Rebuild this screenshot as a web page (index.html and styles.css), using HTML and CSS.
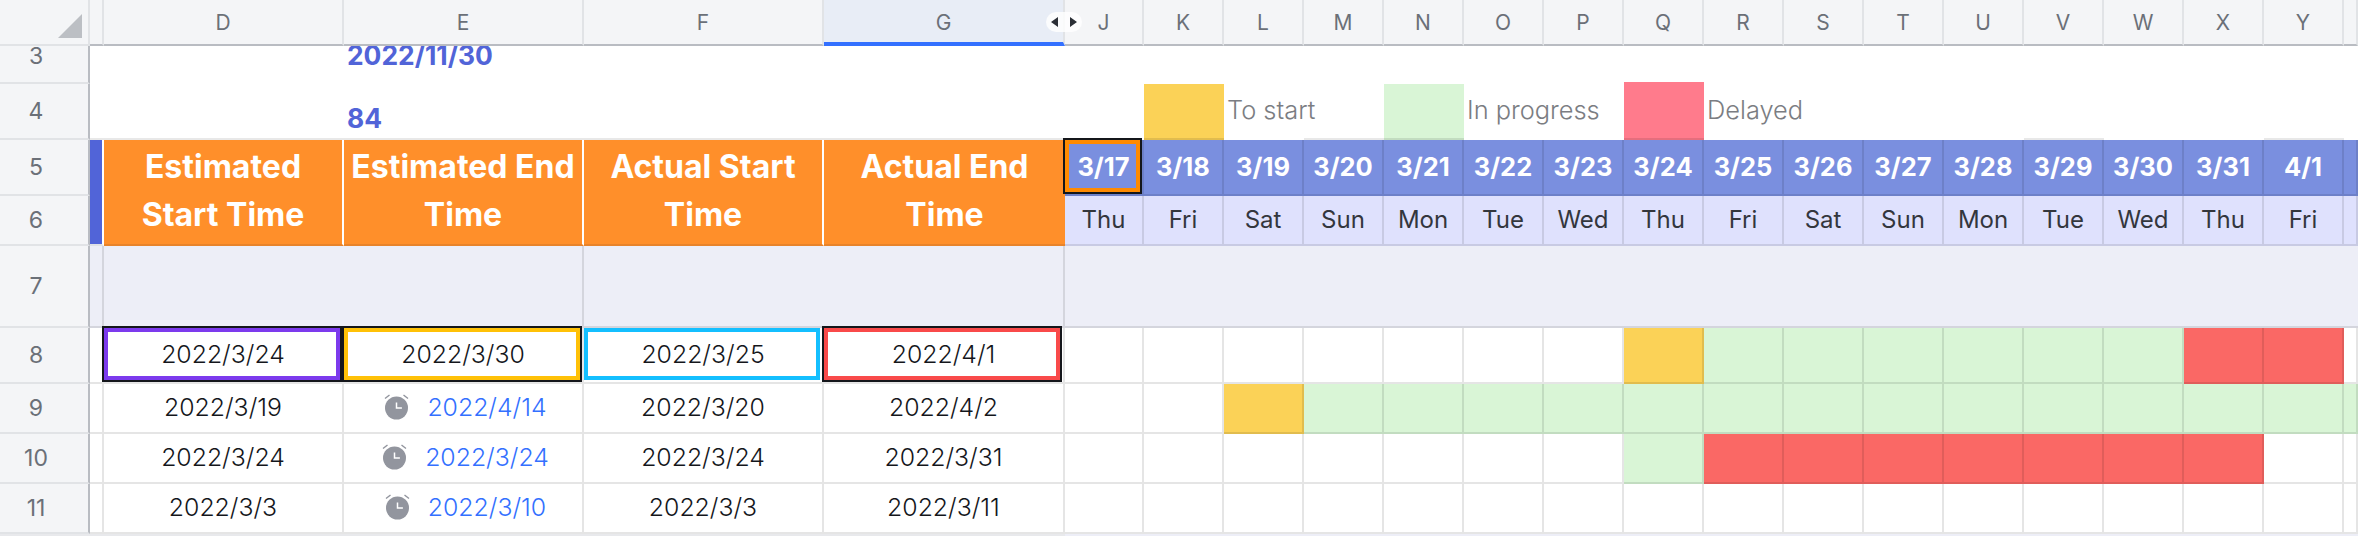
FILE: index.html
```html
<!DOCTYPE html>
<html lang="en">
<head>
  <meta charset="UTF-8">
  <title>Project schedule</title>
  <link rel="stylesheet" href="styles.css">
</head>
<body>
  <div class="sheet">
    <!-- column letters -->
    <div class="col-head corner"><span class="corner-mark"></span></div>
    <div class="col-head"></div>
    <div class="col-head">D</div>
    <div class="col-head">E</div>
    <div class="col-head">F</div>
    <div class="col-head col-active">G
      <div class="resize-pill">
        <svg width="36" height="20" viewBox="0 0 36 20"><path d="M12 5v10l-7-5zM24 5v10l7-5z" fill="#2b2f36"/></svg>
      </div>
    </div>
    <div class="col-head">J</div>
    <div class="col-head">K</div>
    <div class="col-head">L</div>
    <div class="col-head">M</div>
    <div class="col-head">N</div>
    <div class="col-head">O</div>
    <div class="col-head">P</div>
    <div class="col-head">Q</div>
    <div class="col-head">R</div>
    <div class="col-head">S</div>
    <div class="col-head">T</div>
    <div class="col-head">U</div>
    <div class="col-head">V</div>
    <div class="col-head">W</div>
    <div class="col-head">X</div>
    <div class="col-head">Y</div>
    <div class="col-head"></div>

    <!-- row 3 -->
    <div class="row-head row-3-num">3</div>
    <div class="blank span-2"></div>
    <div class="blank summary summary-clipped">2022/11/30</div>
    <div class="blank span-rest-3"></div>

    <!-- row 4 -->
    <div class="row-head">4</div>
    <div class="blank span-2 rule"></div>
    <div class="blank summary summary-low rule">84</div>
    <div class="blank rule"></div>
    <div class="blank rule"></div>
    <div class="blank"></div>
    <div class="legend-box to-start"></div>
    <div class="legend-text">To start</div>
    <div class="blank rule"></div>
    <div class="legend-box in-progress"></div>
    <div class="legend-text">In progress</div>
    <div class="blank"></div>
    <div class="legend-box delayed legend-raised"></div>
    <div class="legend-text">Delayed</div>
    <div class="blank"></div>
    <div class="blank"></div>
    <div class="blank"></div>
    <div class="blank rule"></div>
    <div class="blank"></div>
    <div class="blank"></div>
    <div class="blank rule"></div>
    <div class="blank"></div>

    <!-- rows 5 and 6 -->
    <div class="row-head">5</div>
    <div class="freeze-mark"></div>
    <div class="title">Estimated<br>Start Time</div>
    <div class="title">Estimated End<br>Time</div>
    <div class="title">Actual Start<br>Time</div>
    <div class="title title-last">Actual End<br>Time</div>
    <div class="date date-selected">3/17</div>
    <div class="date">3/18</div>
    <div class="date">3/19</div>
    <div class="date">3/20</div>
    <div class="date">3/21</div>
    <div class="date">3/22</div>
    <div class="date">3/23</div>
    <div class="date">3/24</div>
    <div class="date">3/25</div>
    <div class="date">3/26</div>
    <div class="date">3/27</div>
    <div class="date">3/28</div>
    <div class="date">3/29</div>
    <div class="date">3/30</div>
    <div class="date">3/31</div>
    <div class="date">4/1</div>
    <div class="date"></div>

    <div class="row-head">6</div>
    <div class="day">Thu</div>
    <div class="day">Fri</div>
    <div class="day">Sat</div>
    <div class="day">Sun</div>
    <div class="day">Mon</div>
    <div class="day">Tue</div>
    <div class="day">Wed</div>
    <div class="day">Thu</div>
    <div class="day">Fri</div>
    <div class="day">Sat</div>
    <div class="day">Sun</div>
    <div class="day">Mon</div>
    <div class="day">Tue</div>
    <div class="day">Wed</div>
    <div class="day">Thu</div>
    <div class="day">Fri</div>
    <div class="day"></div>

    <!-- row 7 -->
    <div class="row-head">7</div>
    <div class="group"></div>
    <div class="group span-2"></div>
    <div class="group span-2"></div>
    <div class="group span-timeline"></div>

    <!-- row 8 -->
    <div class="row-head">8</div>
    <div class="cell"></div>
    <div class="cell boxed boxed-purple">2022/3/24</div>
    <div class="cell boxed boxed-amber">2022/3/30</div>
    <div class="cell boxed boxed-sky">2022/3/25</div>
    <div class="cell boxed boxed-red">2022/4/1</div>
    <div class="cell"></div>
    <div class="cell"></div>
    <div class="cell"></div>
    <div class="cell"></div>
    <div class="cell"></div>
    <div class="cell"></div>
    <div class="cell"></div>
    <div class="cell to-start"></div>
    <div class="cell in-progress"></div>
    <div class="cell in-progress"></div>
    <div class="cell in-progress"></div>
    <div class="cell in-progress"></div>
    <div class="cell in-progress"></div>
    <div class="cell in-progress"></div>
    <div class="cell late"></div>
    <div class="cell late"></div>
    <div class="cell"></div>

    <!-- row 9 -->
    <div class="row-head">9</div>
    <div class="cell"></div>
    <div class="cell">2022/3/19</div>
    <div class="cell reminder">
      <svg class="alarm" width="25" height="26" viewBox="0 0 25 26"><circle cx="12.5" cy="14" r="11.5" fill="#92959e"/><path d="M1 4.5 5.5 1M24 4.5 19.5 1" stroke="#92959e" stroke-width="1.4" fill="none"/><path d="M12.5 8.5v5.6h5.4" stroke="#fff" stroke-width="1.5" fill="none"/></svg>
      <span>2022/4/14</span>
    </div>
    <div class="cell">2022/3/20</div>
    <div class="cell">2022/4/2</div>
    <div class="cell"></div>
    <div class="cell"></div>
    <div class="cell to-start"></div>
    <div class="cell in-progress"></div>
    <div class="cell in-progress"></div>
    <div class="cell in-progress"></div>
    <div class="cell in-progress"></div>
    <div class="cell in-progress"></div>
    <div class="cell in-progress"></div>
    <div class="cell in-progress"></div>
    <div class="cell in-progress"></div>
    <div class="cell in-progress"></div>
    <div class="cell in-progress"></div>
    <div class="cell in-progress"></div>
    <div class="cell in-progress"></div>
    <div class="cell in-progress"></div>
    <div class="cell in-progress"></div>

    <!-- row 10 -->
    <div class="row-head">10</div>
    <div class="cell"></div>
    <div class="cell">2022/3/24</div>
    <div class="cell reminder">
      <svg class="alarm" width="25" height="26" viewBox="0 0 25 26"><circle cx="12.5" cy="14" r="11.5" fill="#92959e"/><path d="M1 4.5 5.5 1M24 4.5 19.5 1" stroke="#92959e" stroke-width="1.4" fill="none"/><path d="M12.5 8.5v5.6h5.4" stroke="#fff" stroke-width="1.5" fill="none"/></svg>
      <span>2022/3/24</span>
    </div>
    <div class="cell">2022/3/24</div>
    <div class="cell">2022/3/31</div>
    <div class="cell"></div>
    <div class="cell"></div>
    <div class="cell"></div>
    <div class="cell"></div>
    <div class="cell"></div>
    <div class="cell"></div>
    <div class="cell"></div>
    <div class="cell in-progress"></div>
    <div class="cell late"></div>
    <div class="cell late"></div>
    <div class="cell late"></div>
    <div class="cell late"></div>
    <div class="cell late"></div>
    <div class="cell late"></div>
    <div class="cell late"></div>
    <div class="cell"></div>
    <div class="cell"></div>

    <!-- row 11 -->
    <div class="row-head">11</div>
    <div class="cell"></div>
    <div class="cell">2022/3/3</div>
    <div class="cell reminder">
      <svg class="alarm" width="25" height="26" viewBox="0 0 25 26"><circle cx="12.5" cy="14" r="11.5" fill="#92959e"/><path d="M1 4.5 5.5 1M24 4.5 19.5 1" stroke="#92959e" stroke-width="1.4" fill="none"/><path d="M12.5 8.5v5.6h5.4" stroke="#fff" stroke-width="1.5" fill="none"/></svg>
      <span>2022/3/10</span>
    </div>
    <div class="cell">2022/3/3</div>
    <div class="cell">2022/3/11</div>
    <div class="cell"></div>
    <div class="cell"></div>
    <div class="cell"></div>
    <div class="cell"></div>
    <div class="cell"></div>
    <div class="cell"></div>
    <div class="cell"></div>
    <div class="cell"></div>
    <div class="cell"></div>
    <div class="cell"></div>
    <div class="cell"></div>
    <div class="cell"></div>
    <div class="cell"></div>
    <div class="cell"></div>
    <div class="cell"></div>
    <div class="cell"></div>
    <div class="cell"></div>

    <div class="strip-left"></div>
    <div class="strip-right"></div>
  </div>
</body>
</html>
```

FILE: styles.css
```css
:root {
  --head-bg: #f4f5f7;
  --head-line: #e1e3e6;
  --head-edge: #b9bcc2;
  --head-text: #6b7078;
  --grid-line: rgba(0, 0, 0, 0.1);
  --ink: #14161b;
  --summary: #5164d8;
  --orange: #ff8f2a;
  --yellow: #fbd257;
  --green: #d9f5d6;
  --red: #fa6865;
  --pink: #ff7b8c;
  --periwinkle: #7a8fdf;
  --lilac: #dfe1fd;
  --group-bg: #edeef7;
}

* {
  margin: 0;
  padding: 0;
  box-sizing: border-box;
}

body {
  background-color: #fff;
  color: var(--ink);
  font-family: Inter, 'Liberation Sans', sans-serif;
  width: 2358px;
  height: 536px;
  overflow: hidden;
}

.sheet {
  display: grid;
  grid-template-columns: 90px 14px 240px 240px 240px 241px 79px repeat(15, 80px) 14px;
  grid-template-rows: 46px 38px 56px 56px 50px 82px 56px 50px 50px 50px 2px;
}

.col-head,
.row-head,
.cell,
.date,
.day,
.title,
.legend-text {
  display: flex;
  align-items: center;
  justify-content: center;
}

/* headers */
.col-head {
  position: relative;
  background-color: var(--head-bg);
  color: var(--head-text);
  font-size: 21px;
  border-right: 2px solid var(--head-line);
  border-bottom: 2px solid var(--head-edge);
}

.corner {
  justify-content: flex-end;
  align-items: flex-start;
  padding: 14px 6px 0 0;
  border-bottom-color: var(--head-line);
}

.corner-mark {
  width: 24px;
  height: 24px;
  background-color: #bcbfc4;
  clip-path: polygon(100% 0, 100% 100%, 0 100%);
}

.col-active {
  background-color: #e8edf6;
  border-bottom: 4px solid #3370ff;
  padding-top: 2px;
  z-index: 2;
}

.resize-pill {
  position: absolute;
  top: 12px;
  right: -19px;
  width: 36px;
  height: 20px;
  border-radius: 10px;
  background-color: rgba(255, 255, 255, 0.8);
  line-height: 0;
}

.row-head {
  grid-column: 1;
  background-color: var(--head-bg);
  color: var(--head-text);
  font-size: 23px;
  padding-right: 16px;
  border-right: 2px solid var(--head-edge);
  border-bottom: 2px solid var(--head-line);
}

.row-3-num {
  align-items: flex-start;
  line-height: 20px;
}

/* rows 3 and 4 */
.blank {
  background-color: #fff;
}

.span-2 {
  grid-column: span 2;
}

.span-rest-3 {
  grid-column: span 19;
}

.rule {
  border-bottom: 2px solid #e8e8e8;
}

.summary {
  color: var(--summary);
  font-size: 26.4px;
  font-weight: 700;
  padding-left: 3px;
  overflow: hidden;
}

.summary-clipped {
  line-height: 18px;
}

.summary-low {
  padding-top: 19px;
  line-height: 30px;
}

.legend-box {
  border-bottom: 2px solid var(--grid-line);
}

.legend-raised {
  margin-top: -2px;
}

.legend-text {
  justify-content: flex-start;
  color: #7b7d82;
  font-size: 25.4px;
  font-weight: 300;
  white-space: nowrap;
  padding: 0 0 5px 3px;
  z-index: 1;
}

/* frozen header */
.freeze-mark {
  grid-row: span 2;
  background-color: var(--summary);
  border-right: 2px solid #fff;
  border-bottom: 2px solid #dfe1e6;
}

.title {
  grid-row: span 2;
  background-color: var(--orange);
  color: #fff;
  font-size: 32px;
  font-weight: 700;
  line-height: 48px;
  text-align: center;
  padding-bottom: 2px;
  border-right: 2px solid #fff;
  border-bottom: 2px solid #e8832a;
}

.title-last {
  border-right: 0;
}

.date {
  background-color: var(--periwinkle);
  color: #fff;
  font-size: 25.5px;
  font-weight: 700;
  padding-bottom: 2px;
  border-right: 2px solid var(--grid-line);
  border-bottom: 2px solid var(--grid-line);
}

.date-selected {
  position: relative;
}

.date-selected::after {
  content: '';
  position: absolute;
  inset: 0 2px 2px 0;
  border: 4px solid #ff8a00;
  outline: 2px solid var(--ink);
}

.day {
  background-color: var(--lilac);
  color: #33363d;
  font-size: 24px;
  padding-bottom: 2px;
  border-right: 2px solid var(--grid-line);
  border-bottom: 2px solid var(--grid-line);
}

/* row 7 */
.group {
  background-color: var(--group-bg);
  border-right: 2px solid var(--grid-line);
  border-bottom: 2px solid var(--grid-line);
}

.span-timeline {
  grid-column: span 17;
  border-right: 0;
}

/* body */
.cell {
  background-color: #fff;
  font-size: 24.8px;
  font-weight: 300;
  padding-bottom: 2px;
  border-right: 2px solid var(--grid-line);
  border-bottom: 2px solid var(--grid-line);
}

.to-start {
  background-color: var(--yellow);
}

.in-progress {
  background-color: var(--green);
}

.late {
  background-color: var(--red);
}

.delayed {
  background-color: var(--pink);
}

.boxed {
  position: relative;
}

.boxed::after {
  content: '';
  position: absolute;
  inset: 0 2px 2px 0;
  border: 4px solid transparent;
  outline: 2px solid var(--ink);
}

.boxed-purple::after {
  border-color: #7c3aed;
}

.boxed-amber::after {
  border-color: #ffc107;
}

.boxed-sky::after {
  border-color: #14bfff;
  outline: 0;
}

.boxed-red::after {
  right: 3px;
  border-color: #f94a4a;
}

.reminder {
  gap: 18px;
  padding-left: 5px;
  color: #3370ff;
}

.alarm {
  flex-shrink: 0;
}

.strip-left {
  grid-column: 1 / span 6;
  background-color: #e8e9ec;
}

.strip-right {
  grid-column: 7 / -1;
  background-color: var(--group-bg);
}
```
